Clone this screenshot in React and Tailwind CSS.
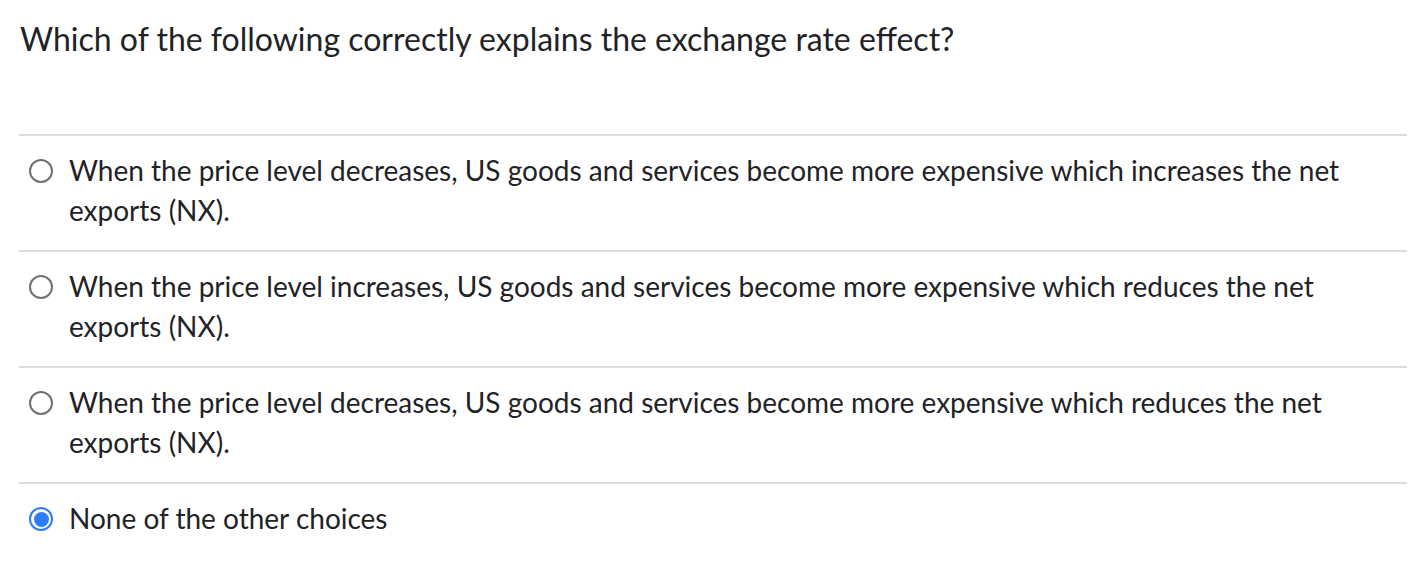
import React from 'react';

const choices = [
  'When the price level decreases, US goods and services become more expensive which increases the net exports (NX).',
  'When the price level increases, US goods and services become more expensive which reduces the net exports (NX).',
  'When the price level decreases, US goods and services become more expensive which reduces the net exports (NX).',
  'None of the other choices',
];

function Radio({ checked }) {
  if (checked) {
    return (
      <span className="mt-[9px] flex h-[24px] w-[24px] shrink-0 items-center justify-center rounded-full border-[2px] border-[#2f7bf5] bg-white">
        <span className="h-[15px] w-[15px] rounded-full bg-[#2f7bf5]" />
      </span>
    );
  }
  return <span className="mt-[9px] h-[24px] w-[24px] shrink-0 rounded-full border-[2px] border-[#717171] bg-white" />;
}

export default function App() {
  return (
    <div className="min-h-[562px] bg-white px-[19px] font-['Lato','Noto_Sans',sans-serif] text-[#1f2328]">
      <h1 className="pt-[19px] pb-[75px] pl-[1px] text-[32px] leading-[40px]">
        Which of the following correctly explains the exchange rate effect?
      </h1>
      <div className="w-[1388px]">
        {choices.map((c, i) => (
          <div key={i} className="flex gap-[16px] border-t-[2px] border-[#dcdcdc] pt-[14px] pb-[20px] pl-[10px] pr-[20px]">
            <Radio checked={i === 3} />
            <p className="text-[28px] leading-[40px]">{c}</p>
          </div>
        ))}
      </div>
    </div>
  );
}
